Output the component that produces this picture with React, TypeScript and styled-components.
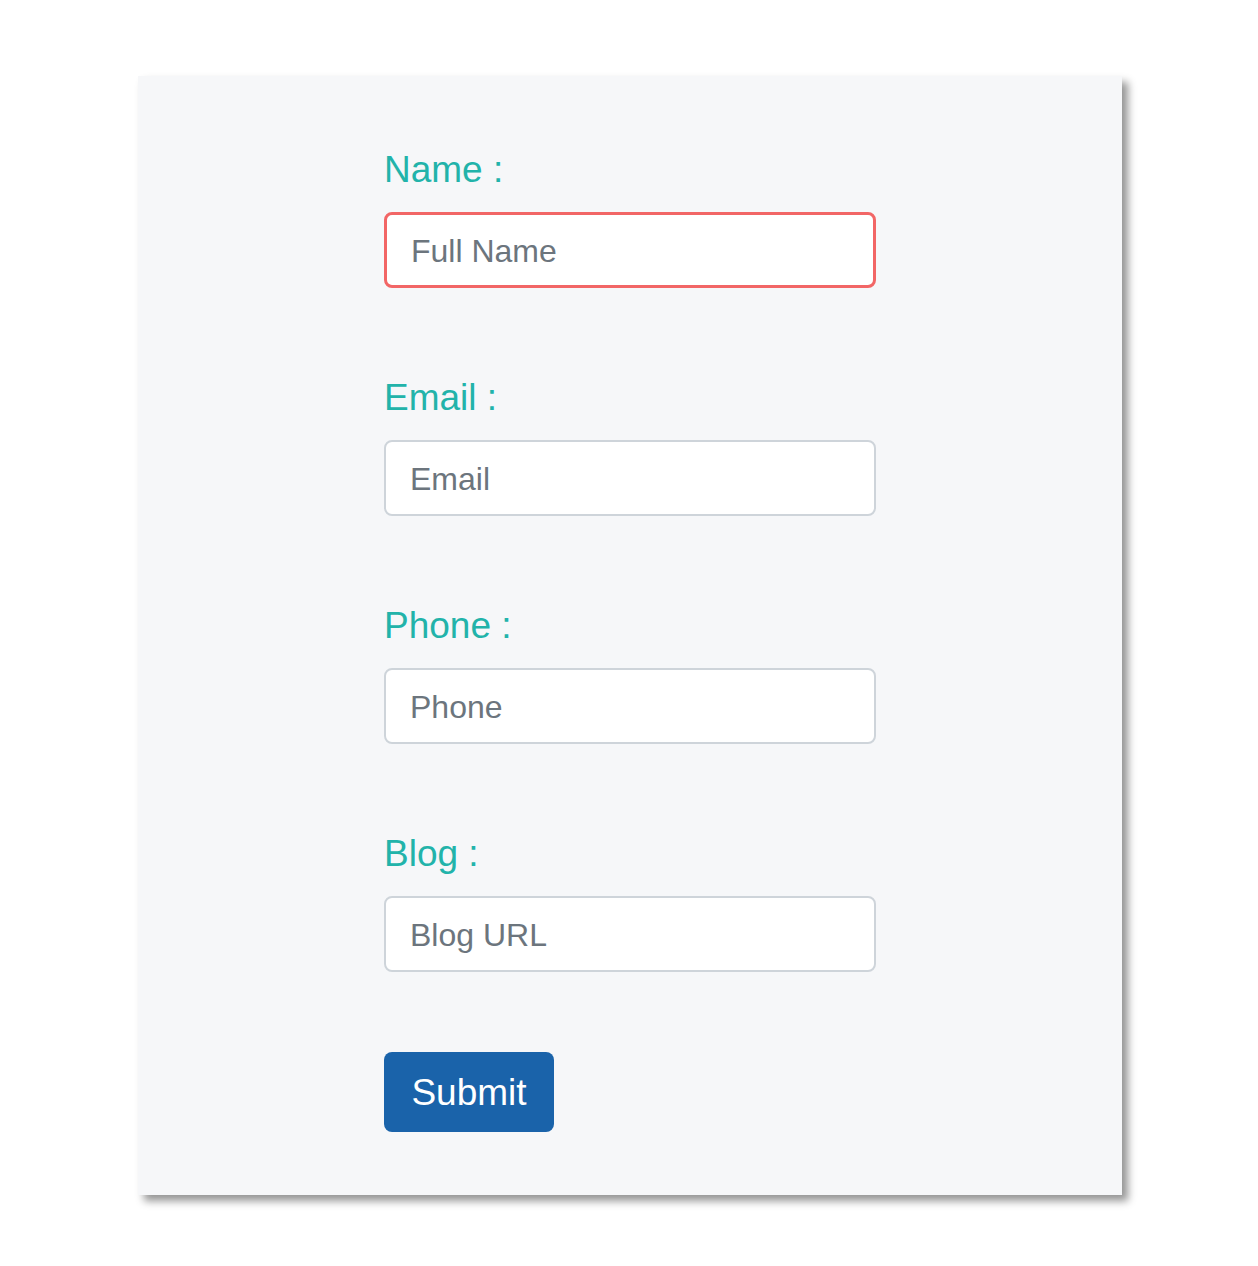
import React from 'react';
import styled, { createGlobalStyle } from 'styled-components';

const GlobalStyle = createGlobalStyle`
    body {
        margin: 0;
        background: #ffffff;
        font-family: 'Liberation Sans', Arial, Helvetica, sans-serif;
    }
    * {
        box-sizing: border-box;
    }
`;

const fields = [
    { label: 'Name :', placeholder: 'Full Name', type: 'text', invalid: true },
    { label: 'Email :', placeholder: 'Email', type: 'email', invalid: false },
    { label: 'Phone :', placeholder: 'Phone', type: 'tel', invalid: false },
    { label: 'Blog :', placeholder: 'Blog URL', type: 'url', invalid: false },
];

export default function App() {
    return (
        <>
            <GlobalStyle />
            <Page>
                <Card>
                    <Form onSubmit={(e) => e.preventDefault()}>
                        {fields.map(({ label, placeholder, type, invalid }) => (
                            <Group key={label}>
                                <Label>{label}</Label>
                                <Input type={type} placeholder={placeholder} $invalid={invalid} />
                            </Group>
                        ))}
                        <SubmitButton type="submit">Submit</SubmitButton>
                    </Form>
                </Card>
            </Page>
        </>
    );
}

const Page = styled.div`
    padding: 76px 136px 71px 138px;
`;

const Card = styled.div`
    width: 984px;
    background: #f6f7f9;
    box-shadow: 6px 6px 8px rgba(0, 0, 0, 0.42);
    padding: 71px 0 63px 246px;
`;

const Form = styled.form`
    width: 492px;
    display: flex;
    flex-direction: column;
    align-items: flex-start;
`;

const Group = styled.div`
    width: 100%;
    margin-bottom: 87px;

    &:nth-last-child(2) {
        margin-bottom: 80px;
    }
`;

const Label = styled.label`
    display: block;
    color: #22b3aa;
    font-size: 37px;
    line-height: 44px;
    padding-top: 1px;
    margin-bottom: 20px;
`;

const Input = styled.input<{ $invalid?: boolean }>`
    display: block;
    width: 100%;
    height: 76px;
    padding: 2px 24px 0;
    font-family: inherit;
    font-size: 32px;
    color: #495057;
    background: #ffffff;
    border: ${(p) => (p.$invalid ? '3px solid #f26666' : '2px solid #ced4da')};
    border-radius: 8px;
    outline: none;

    &::placeholder {
        color: #6c757d;
    }
`;

const SubmitButton = styled.button`
    width: 170px;
    height: 80px;
    padding-top: 2px;
    background: #1a63aa;
    color: #ffffff;
    border: none;
    border-radius: 8px;
    font-family: inherit;
    font-size: 37px;
    cursor: pointer;
`;
